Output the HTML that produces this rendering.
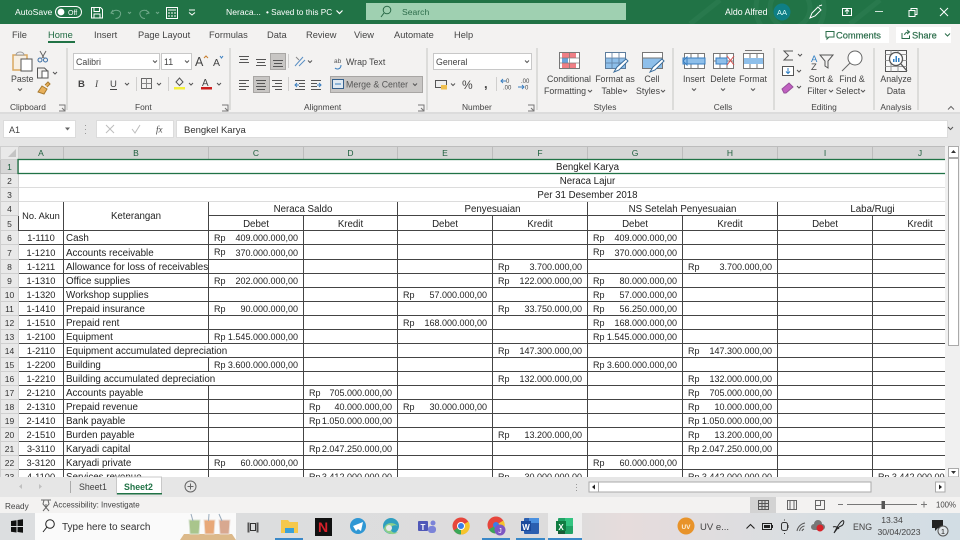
<!DOCTYPE html>
<html><head><meta charset="utf-8"><title>Neraca</title>
<style>
html,body{margin:0;padding:0;width:960px;height:540px;overflow:hidden;background:#f3f2f1}
#s{position:absolute;left:0;top:146px;width:945px;height:331px;overflow:hidden;background:#fff}
table{border-collapse:collapse;table-layout:fixed;width:967px;font:9px "Liberation Sans",sans-serif;color:#222}
td{height:14px;line-height:11px;padding:2px 5px 0 0;border:1px solid #444;text-align:right;white-space:nowrap;position:relative;box-sizing:border-box}
td i{position:absolute;left:5px;top:2px;font-style:normal}
td.h{background:#e9e9e9;border:1px solid #cfcfcf;text-align:center;color:#333;padding:2px 0 0;font-size:8.5px}
td.c{background:#d6d6d6;border:1px solid #bcbcbc;text-align:center;color:#1f5f3e;padding:2px 0 0;font-size:8.5px}
td.a{text-align:center;padding:2px 0 0;font-size:9.3px}
td.b{text-align:left;padding:2px 0 0 2px;font-size:9.8px;overflow:visible}
td.m{text-align:center;padding:2px 0 0;font-size:9.7px}
td.r{padding:0;line-height:13px}
td.n{border-right:0}
td.l{border-left:0}
td.g{text-align:center;padding:2px 0 0 189px;border:1px solid #dcdcdc;font-size:9.7px}
tr.t td{height:13px;line-height:11px;padding:0}
tr.w td.h{height:15px}
svg{position:absolute;left:0;top:0}
text{font-family:"Liberation Sans",sans-serif;font-size:9px;fill:#444}
.m2{text-anchor:middle}
</style></head><body>
<div id="s"><table>
<colgroup><col style="width:18px"><col style="width:45px"><col style="width:145px"><col style="width:95px"><col style="width:94px"><col style="width:95px"><col style="width:95px"><col style="width:95px"><col style="width:95px"><col style="width:95px"><col style="width:95px"></colgroup>
<tr class="t"><td class="h"></td><td class="c">A</td><td class="c">B</td><td class="c">C</td><td class="c">D</td><td class="c">E</td><td class="c">F</td><td class="c">G</td><td class="c">H</td><td class="c">I</td><td class="c">J</td></tr>
<tr><td class="c">1</td><td class="g" colspan="10">Bengkel Karya</td></tr>
<tr><td class="h">2</td><td class="g" colspan="10">Neraca Lajur</td></tr>
<tr><td class="h">3</td><td class="g" colspan="10">Per 31 Desember 2018</td></tr>
<tr><td class="h">4</td><td class="a r" rowspan="2">No. Akun</td><td class="m r" rowspan="2">Keterangan</td><td class="m" colspan="2">Neraca Saldo</td><td class="m" colspan="2">Penyesuaian</td><td class="m" colspan="2">NS Setelah Penyesuaian</td><td class="m" colspan="2">Laba/Rugi</td></tr>
<tr class="w"><td class="h">5</td><td class="m">Debet</td><td class="m">Kredit</td><td class="m">Debet</td><td class="m">Kredit</td><td class="m">Debet</td><td class="m">Kredit</td><td class="m">Debet</td><td class="m">Kredit</td></tr>
<tr><td class="h">6</td><td class="a">1-1110</td><td class="b">Cash</td><td><i>Rp</i>409.000.000,00</td><td></td><td></td><td></td><td><i>Rp</i>409.000.000,00</td><td></td><td></td><td></td></tr>
<tr class="w"><td class="h">7</td><td class="a">1-1210</td><td class="b">Accounts receivable</td><td><i>Rp</i>370.000.000,00</td><td></td><td></td><td></td><td><i>Rp</i>370.000.000,00</td><td></td><td></td><td></td></tr>
<tr><td class="h">8</td><td class="a">1-1211</td><td class="b">Allowance for loss of receivables</td><td></td><td></td><td></td><td><i>Rp</i>3.700.000,00</td><td></td><td><i>Rp</i>3.700.000,00</td><td></td><td></td></tr>
<tr><td class="h">9</td><td class="a">1-1310</td><td class="b">Office supplies</td><td><i>Rp</i>202.000.000,00</td><td></td><td></td><td><i>Rp</i>122.000.000,00</td><td><i>Rp</i>80.000.000,00</td><td></td><td></td><td></td></tr>
<tr><td class="h">10</td><td class="a">1-1320</td><td class="b">Workshop supplies</td><td></td><td></td><td><i>Rp</i>57.000.000,00</td><td></td><td><i>Rp</i>57.000.000,00</td><td></td><td></td><td></td></tr>
<tr><td class="h">11</td><td class="a">1-1410</td><td class="b">Prepaid insurance</td><td><i>Rp</i>90.000.000,00</td><td></td><td></td><td><i>Rp</i>33.750.000,00</td><td><i>Rp</i>56.250.000,00</td><td></td><td></td><td></td></tr>
<tr><td class="h">12</td><td class="a">1-1510</td><td class="b">Prepaid rent</td><td></td><td></td><td><i>Rp</i>168.000.000,00</td><td></td><td><i>Rp</i>168.000.000,00</td><td></td><td></td><td></td></tr>
<tr><td class="h">13</td><td class="a">1-2100</td><td class="b">Equipment</td><td><i>Rp</i>1.545.000.000,00</td><td></td><td></td><td></td><td><i>Rp</i>1.545.000.000,00</td><td></td><td></td><td></td></tr>
<tr><td class="h">14</td><td class="a">1-2110</td><td class="b n">Equipment accumulated depreciation</td><td class="l"></td><td></td><td></td><td><i>Rp</i>147.300.000,00</td><td></td><td><i>Rp</i>147.300.000,00</td><td></td><td></td></tr>
<tr><td class="h">15</td><td class="a">1-2200</td><td class="b">Building</td><td><i>Rp</i>3.600.000.000,00</td><td></td><td></td><td></td><td><i>Rp</i>3.600.000.000,00</td><td></td><td></td><td></td></tr>
<tr><td class="h">16</td><td class="a">1-2210</td><td class="b n">Building accumulated depreciation</td><td class="l"></td><td></td><td></td><td><i>Rp</i>132.000.000,00</td><td></td><td><i>Rp</i>132.000.000,00</td><td></td><td></td></tr>
<tr><td class="h">17</td><td class="a">2-1210</td><td class="b">Accounts payable</td><td></td><td><i>Rp</i>705.000.000,00</td><td></td><td></td><td></td><td><i>Rp</i>705.000.000,00</td><td></td><td></td></tr>
<tr><td class="h">18</td><td class="a">2-1310</td><td class="b">Prepaid revenue</td><td></td><td><i>Rp</i>40.000.000,00</td><td><i>Rp</i>30.000.000,00</td><td></td><td></td><td><i>Rp</i>10.000.000,00</td><td></td><td></td></tr>
<tr><td class="h">19</td><td class="a">2-1410</td><td class="b">Bank payable</td><td></td><td><i>Rp</i>1.050.000.000,00</td><td></td><td></td><td></td><td><i>Rp</i>1.050.000.000,00</td><td></td><td></td></tr>
<tr><td class="h">20</td><td class="a">2-1510</td><td class="b">Burden payable</td><td></td><td></td><td></td><td><i>Rp</i>13.200.000,00</td><td></td><td><i>Rp</i>13.200.000,00</td><td></td><td></td></tr>
<tr><td class="h">21</td><td class="a">3-3110</td><td class="b">Karyadi capital</td><td></td><td><i>Rp</i>2.047.250.000,00</td><td></td><td></td><td></td><td><i>Rp</i>2.047.250.000,00</td><td></td><td></td></tr>
<tr><td class="h">22</td><td class="a">3-3120</td><td class="b">Karyadi private</td><td><i>Rp</i>60.000.000,00</td><td></td><td></td><td></td><td><i>Rp</i>60.000.000,00</td><td></td><td></td><td></td></tr>
<tr><td class="h">23</td><td class="a">4-1100</td><td class="b">Services revenue</td><td></td><td><i>Rp</i>3.412.000.000,00</td><td></td><td><i>Rp</i>30.000.000,00</td><td></td><td><i>Rp</i>3.442.000.000,00</td><td></td><td><i>Rp</i>3.442.000.000,00</td></tr>
</table></div>

<svg width="960" height="540" viewBox="0 0 960 540" fill="none">
<!-- selection -->
<rect x="18" y="159.500" width="928" height="14" stroke="#217346" stroke-width="1.300"/>
<!-- title bar -->
<rect width="960" height="24" fill="#217346"/>
<g stroke="#2c7c50" stroke-width="5" opacity=".7"><circle cx="790" cy="8" r="20"/><circle cx="790" cy="8" r="34"/><path d="M690 24L720 0M850 24L880 0"/></g>
<text x="15" y="15" style="fill:#fff;font-size:8.600px">AutoSave</text>
<rect x="55.500" y="6.500" width="26" height="11" rx="5.500" stroke="#fff"/><circle cx="61" cy="12" r="3.400" fill="#fff"/>
<text x="68" y="15" style="fill:#fff;font-size:7px">Off</text>
<g stroke="#fff"><path d="M91.500 7.500h9l2 2v8.500h-11zM94 8v3.500h5.500V8M94 18v-4h6v4"/></g>
<g stroke="#6fa98a"><path d="M113 10l-2 3 3 1M111.500 12.500c4-4 10-2 9 2s-4 4-5 4M146 10l3 3-3 1M149 12.500c-4-4-10-2-9 2s4 4 5 4"/><path d="M128 12l1.500 1.500 1.500-1.500M156 12l1.500 1.500 1.500-1.500"/></g>
<rect x="166.500" y="7.500" width="11" height="11" stroke="#fff"/><path d="M168 10h8M168 13h2M171 13h2M174 13h2M168 16h2M171 16h2M174 16h2" stroke="#fff"/>
<path d="M189 10h6M189 12.500l3 2.500 3-2.500" stroke="#fff"/>
<text x="226" y="15" style="fill:#fff;font-size:8.600px">Neraca...</text>
<text x="266" y="15" style="fill:#fff;font-size:8.200px">• Saved to this PC</text>
<path d="M336.500 10.500l3 3 3-3" stroke="#fff" stroke-width="1.200"/>
<rect x="366" y="3" width="260" height="17" fill="#9fd0b1"/>
<circle cx="387" cy="10" r="3.800" stroke="#2a6a48"/><path d="M384 13l-3 4" stroke="#2a6a48"/>
<text x="402" y="15" style="fill:#2d6c4b;font-size:8.600px">Search</text>
<text x="725" y="15" style="fill:#fff;font-size:8.800px">Aldo Alfred</text>
<circle cx="782" cy="12" r="8.500" fill="#0f7f85"/><text x="782" y="15" class="m2" style="fill:#dff;font-size:7.500px">AA</text>
<path d="M810 18l2-5 6-6 3 3-6 6zM819 6l3-1" stroke="#fff"/>
<rect x="842.500" y="8.500" width="9" height="7" stroke="#fff"/><path d="M847 14v-4M845 11.500l2-2 2 2" stroke="#fff"/>
<path d="M875 11.500h8" stroke="#cfe3d8"/>
<path d="M909 10.500h6v6h-6zM911 10V8.500h6v6h-1.500" stroke="#fff"/>
<path d="M940 8l8 8M948 8l-8 8" stroke="#fff"/>

<!-- tabs + ribbon -->
<rect y="24" width="960" height="89" fill="#f3f2f1"/>
<rect y="113" width="960" height="33" fill="#e6e6e6"/>
<rect y="112" width="960" height="2" fill="#dcdcdc"/>
<text x="12" y="38" style="font-size:9.300px">File</text>
<text x="48" y="38" style="font-size:9.300px;fill:#1f6b42">Home</text>
<text x="94" y="38" style="font-size:9.300px">Insert</text>
<text x="138" y="38" style="font-size:9.300px">Page Layout</text>
<text x="209" y="38" style="font-size:9.300px">Formulas</text>
<text x="267" y="38" style="font-size:9.300px">Data</text>
<text x="306" y="38" style="font-size:9.300px">Review</text>
<text x="354" y="38" style="font-size:9.300px">View</text>
<text x="394" y="38" style="font-size:9.300px">Automate</text>
<text x="454" y="38" style="font-size:9.300px">Help</text>
<rect x="48" y="41" width="27" height="2" fill="#217346"/>
<rect x="820" y="27" width="69" height="16" fill="#fff"/>
<path d="M826 31.500h8v5.500h-5l-2 2v-2h-1z" stroke="#2b6d4a"/>
<text x="836" y="38.500" style="fill:#2b6d4a;font-size:9.300px;stroke:#2b6d4a;stroke-width:.2">Comments</text>
<rect x="896" y="27" width="55" height="16" fill="#fff"/>
<path d="M902 33v5.500h7.500v-3M904.500 35c.5-2 2-3 4-3M907 30l2.500 2-2.500 2" stroke="#2b6d4a"/>
<text x="912" y="38.500" style="fill:#2b6d4a;font-size:9.300px;stroke:#2b6d4a;stroke-width:.2">Share</text>
<path d="M945 33.500l2.500 2.500 2.500-2.500" stroke="#2b6d4a"/>

<!-- separators -->
<g stroke="#d0cfce" stroke-width="1.300"><path d="M67 48v62M230 48v62M427 48v62M537 48v62M673 48v62M774 48v62M874 48v62M918 48v62"/></g>

<!-- clipboard -->
<rect x="13" y="55" width="14" height="15" fill="#f7efe2" stroke="#d9a860" stroke-width="1.500"/>
<path d="M16 55c0-4 8-4 8 0z" fill="#eee" stroke="#999"/>
<rect x="21" y="59" width="11" height="12" fill="#fff" stroke="#555"/>
<text x="11" y="82" style="font-size:8.800px">Paste</text>
<path d="M18 88.500l2 2 2-2" stroke="#555"/>
<path d="M40 51l4 7M46 51l-4 7" stroke="#666"/><circle cx="40" cy="60" r="2" stroke="#3a6ea5"/><circle cx="45.500" cy="60" r="2" stroke="#3a6ea5"/>
<path d="M37.500 68h7l3 3v7h-10z" stroke="#555"/><rect x="42" y="71" width="6" height="7" fill="#fff" stroke="#555"/>
<path d="M53 72l2 2 2-2" stroke="#555"/>
<path d="M38 92l4-6 5 3-3 5zM45 85l3-3 2 2-3 3" fill="#e8b05a" stroke="#a87a30"/>
<text x="10" y="110" style="font-size:8.400px">Clipboard</text>
<path d="M59 105h6v6h-6M65 111l-3-3" stroke="#777"/>

<!-- font -->
<rect x="73.500" y="53.500" width="86" height="16" fill="#fff" stroke="#c8c8c8"/>
<text x="76" y="65" style="font-size:8.800px">Calibri</text><path d="M153 60.500l2 2 2-2" stroke="#555"/>
<rect x="161.500" y="53.500" width="30" height="16" fill="#fff" stroke="#c8c8c8"/>
<text x="164" y="65" style="font-size:8.800px">11</text><path d="M185 60.500l2 2 2-2" stroke="#555"/>
<text x="195" y="66" style="font-size:12.500px">A</text><path d="M204 58l2-2 2 2" stroke="#c77c2a"/>
<text x="213" y="66" style="font-size:10.500px">A</text><path d="M220 56l1.500 2 1.500-2" stroke="#3a7ebf"/>
<text x="78" y="87" style="font-size:9.500px;font-weight:bold">B</text>
<text x="95" y="87" style="font-size:9.500px;font-style:italic;font-family:'Liberation Serif',serif">I</text>
<text x="110" y="87" style="font-size:9.500px">U</text><path d="M110 89.500h7" stroke="#444"/>
<path d="M125 83l2 2 2-2M157 83l2 2 2-2M189 83l2 2 2-2M217 83l2 2 2-2" stroke="#555"/>
<path d="M136.500 77v14M168.500 77v14" stroke="#d0cfce"/>
<rect x="141.500" y="78.500" width="10" height="10" stroke="#666"/><path d="M146.500 78.500v10M141.500 83.500h10" stroke="#888"/>
<path d="M176 82l3.500-4 3.500 4-3.500 3.500z" stroke="#555"/><rect x="174" y="87" width="11" height="2.500" fill="#f4f03a"/>
<text x="202" y="86" style="font-size:9.800px">A</text><rect x="201" y="87" width="11" height="2.500" fill="#cc1f1f"/>
<text x="135" y="110" style="font-size:8.400px">Font</text>
<path d="M222 105h6v6h-6M228 111l-3-3" stroke="#777"/>

<!-- alignment -->
<rect x="270.500" y="53.500" width="15" height="16" fill="#c8c6c4" stroke="#a8a6a4"/>
<rect x="253.500" y="76.500" width="16" height="16" fill="#c8c6c4" stroke="#a8a6a4"/>
<g stroke="#555"><path d="M239 56.500h10M240 59.500h8M239 62.500h10M256 59.500h10M257 62.500h8M256 65.500h10M273 60.500h10M274 63.500h8M273 66.500h10"/>
<path d="M239 80.500h10M239 83.500h7M239 86.500h10M239 89.500h7M256 80.500h10M257 83.500h8M256 86.500h10M257 89.500h8M272 80.500h10M275 83.500h7M272 86.500h10M275 89.500h7"/>
<path d="M288.500 54v14M288.500 77v14" stroke="#d0cfce"/>
<path d="M295 66l8-9M299 66l6-6" stroke="#5a8fc4"/><path d="M296 57l3 3" stroke="#888"/><path d="M308 60.500l2 2 2-2"/>
<path d="M295 80.500h10M299 83.500h6M299 86.500h6M295 89.500h10M311 80.500h10M311 83.500h6M311 86.500h6M311 89.500h10"/></g>
<path d="M299 85h-4M297 83l-2 2 2 2M317 85h4M319 83l2 2-2 2" stroke="#3a7ebf"/>
<text x="334" y="63" style="font-size:6.500px;fill:#555">ab</text><path d="M335 68c2 2 6 1 6-3" stroke="#3a7ebf"/>
<text x="346" y="65" style="font-size:8.800px">Wrap Text</text>
<rect x="330.500" y="76.500" width="92" height="16" fill="#c8c6c4" stroke="#a8a6a4"/>
<rect x="332.500" y="79.500" width="11" height="9" fill="#dfe9f2" stroke="#35608c"/><path d="M335 84h6" stroke="#3a7ebf"/>
<text x="346" y="87.500" style="font-size:8.800px;fill:#555">Merge &amp; Center</text>
<path d="M413 83.500l2 2 2-2" stroke="#555"/>
<text x="304" y="110" style="font-size:8.400px">Alignment</text>
<path d="M418 105h6v6h-6M424 111l-3-3" stroke="#777"/>

<!-- number -->
<rect x="433.500" y="53.500" width="98" height="16" fill="#fff" stroke="#c8c8c8"/>
<text x="436" y="65" style="font-size:8.800px">General</text><path d="M525 60.500l2 2 2-2" stroke="#555"/>
<rect x="435.500" y="80.500" width="11" height="7" fill="#eee" stroke="#555"/><rect x="441" y="85" width="6" height="4.500" fill="#f0c050"/>
<path d="M451 83.500l2 2 2-2" stroke="#555"/>
<text x="462" y="89" style="font-size:12px">%</text>
<text x="484" y="88" style="font-size:13px;font-weight:bold">,</text>
<path d="M496.500 77v14" stroke="#d0cfce"/>
<text x="506" y="83" style="font-size:6px">0</text><text x="503" y="89.500" style="font-size:6px">.00</text><path d="M506 81h-5M503 79l-2 2 2 2" stroke="#3a7ebf"/>
<text x="521" y="83" style="font-size:6px">.00</text><text x="525" y="89.500" style="font-size:6px">0</text><path d="M518 87h6M522 85l2 2-2 2" stroke="#3a7ebf"/>
<text x="462" y="110" style="font-size:8.400px">Number</text>
<path d="M528 105h6v6h-6M534 111l-3-3" stroke="#777"/>

<!-- styles -->
<rect x="559.500" y="52.500" width="20" height="16" fill="#fff" stroke="#777"/>
<path d="M562 53h6v15h-6zM568 53h8v5h-8zM568 63h8v5h-8z" fill="#ef7f85"/><path d="M562 58h6v5h-6z" fill="#6aa3dc"/><path d="M559.500 58h20M559.500 63h20M569.500 53v15" stroke="#777" opacity=".7"/>
<rect x="605.500" y="52.500" width="20" height="16" fill="#fff" stroke="#5c7c9c"/><rect x="606" y="58" width="19" height="10" fill="#8ebfea"/><path d="M605.500 58h20M605.500 63h20M612 53v15M619 53v15" stroke="#5c7c9c" opacity=".8"/><path d="M614 72l3-5 9-8 2 2-9 9z" fill="#fff" stroke="#3a6d9c"/>
<rect x="642.500" y="52.500" width="20" height="16" fill="#fff" stroke="#777"/><rect x="643" y="58" width="19" height="10" fill="#8ebfea"/><path d="M642.500 58h20" stroke="#777"/><path d="M650 72l3-5 9-8 2 2-9 9z" fill="#fff" stroke="#3a6d9c"/>
<text x="569" y="82" class="m2" style="font-size:8.800px">Conditional</text>
<text x="565" y="94" class="m2" style="font-size:8.800px">Formatting</text><path d="M588 90l2 2 2-2" stroke="#555"/>
<text x="615" y="82" class="m2" style="font-size:8.800px">Format as</text>
<text x="612" y="94" class="m2" style="font-size:8.800px">Table</text><path d="M623 90l2 2 2-2" stroke="#555"/>
<text x="652" y="82" class="m2" style="font-size:8.800px">Cell</text>
<text x="648" y="94" class="m2" style="font-size:8.800px">Styles</text><path d="M661 90l2 2 2-2" stroke="#555"/>
<text x="605" y="110" class="m2" style="font-size:8.400px">Styles</text>

<!-- cells -->
<g stroke="#777"><rect x="684.500" y="53.500" width="20" height="15" fill="#fff"/><path d="M684.500 61h20M691 53.500v15M698 53.500v15"/>
<rect x="713.500" y="53.500" width="20" height="15" fill="#fff"/><path d="M713.500 61h20M720 53.500v15M727 53.500v15"/>
<rect x="743.500" y="53.500" width="20" height="15" fill="#fff"/><path d="M743.500 61h20M750 53.500v15M757 53.500v15M745 50.500h17"/></g>
<rect x="683" y="58" width="22" height="6" fill="#8ebfea" stroke="#3a7ebf"/><path d="M683 61l4-4v8z" fill="#8ebfea" stroke="#3a7ebf"/>
<rect x="716" y="58" width="11" height="6" fill="#8ebfea" stroke="#3a7ebf"/><path d="M727 56l7 9M734 56l-7 9" stroke="#d8504f"/>
<rect x="744" y="58" width="19" height="6" fill="#8ebfea"/>
<text x="694" y="82" class="m2" style="font-size:8.800px">Insert</text><path d="M692 88.500l2 2 2-2" stroke="#555"/>
<text x="723" y="82" class="m2" style="font-size:8.800px">Delete</text><path d="M721 88.500l2 2 2-2" stroke="#555"/>
<text x="753" y="82" class="m2" style="font-size:8.800px">Format</text><path d="M751 88.500l2 2 2-2" stroke="#555"/>
<text x="723" y="110" class="m2" style="font-size:8.400px">Cells</text>

<!-- editing -->
<path d="M793 51h-9l4.500 4.500-4.500 4.500h9" stroke="#555"/>
<path d="M798 54l2 2 2-2M797 70l2 2 2-2M797 86l2 2 2-2" stroke="#555"/>
<rect x="782.500" y="66.500" width="11" height="9" fill="#fff" stroke="#555"/><path d="M788 68v5M786 71.500l2 2 2-2" stroke="#2f7fc4"/>
<path d="M782 89l7-6 4 4-7 6h-2z" fill="#c060c0" stroke="#96509a"/>
<text x="811" y="62" style="font-size:9.500px;fill:#2f7fc4">A</text><text x="811" y="70" style="font-size:9.500px">Z</text>
<path d="M820 55h13l-5 6v7l-3-2v-5z" stroke="#555"/>
<text x="821" y="82" class="m2" style="font-size:8.800px">Sort &amp;</text>
<text x="817" y="94" class="m2" style="font-size:8.800px">Filter</text><path d="M829 90l2 2 2-2" stroke="#555"/>
<circle cx="855" cy="58" r="7" fill="#fff" stroke="#666"/><path d="M850 63l-8 8" stroke="#666"/>
<text x="852" y="82" class="m2" style="font-size:8.800px">Find &amp;</text>
<text x="848" y="94" class="m2" style="font-size:8.800px">Select</text><path d="M861 90l2 2 2-2" stroke="#555"/>
<text x="824" y="110" class="m2" style="font-size:8.400px">Editing</text>

<!-- analyze -->
<rect x="885.500" y="50.500" width="21" height="21" fill="#f8f8f8" stroke="#555"/><path d="M885.500 54.500h21M885.500 60.500h21M885.500 66.500h21M891 50.500v21M898 50.500v21" stroke="#999"/>
<circle cx="896" cy="59" r="6.500" fill="#fff" stroke="#555" stroke-width="1.300"/><path d="M893 59h1.500v3H893zM895.500 56h1.500v6h-1.500zM898 58h1.500v4H898z" fill="#2f7fc4"/>
<path d="M901 64l6 7" stroke="#555" stroke-width="1.300"/>
<text x="896" y="82" class="m2" style="font-size:8.800px">Analyze</text>
<text x="896" y="94" class="m2" style="font-size:8.800px">Data</text>
<text x="896" y="110" class="m2" style="font-size:8.400px">Analysis</text>
<path d="M948 109.500l3-3 3 3" stroke="#666"/>

<!-- formula bar -->
<rect x="3.500" y="120.500" width="72" height="17" fill="#fff" stroke="#dcdcdc"/>
<text x="9" y="133" style="font-size:9px">A1</text><path d="M65 127.500h5l-2.500 3z" fill="#666"/>
<path d="M85.500 125v1M85.500 129v1M85.500 133v1" stroke="#999"/>
<rect x="96.500" y="120.500" width="77" height="17" fill="#fff" stroke="#dcdcdc"/>
<path d="M106 125l8 8M114 125l-8 8M132 129l3 4 5-8" stroke="#bdbdbd"/>
<text x="156" y="132.500" style="font-size:9px;font-style:italic;font-family:'Liberation Serif',serif">fx</text>
<rect x="176.500" y="120.500" width="771" height="17" fill="#fff" stroke="#dcdcdc"/>
<text x="184" y="133" style="font-size:9.500px;fill:#333">Bengkel Karya</text>
<path d="M948 127l2.500 2.500 2.500-2.500" stroke="#555"/>

<!-- corner + right scrollbar -->
<path d="M16 149v8h-8z" fill="#c4c4c4"/>
<rect x="945" y="146" width="15" height="331" fill="#f0f0f0"/>
<rect x="948.500" y="146.500" width="10" height="11" fill="#fff" stroke="#aaa"/><path d="M951 153h5l-2.500-3z" fill="#333"/>
<rect x="948.500" y="158.500" width="10" height="187" fill="#fff" stroke="#aaa"/>
<rect x="948.500" y="468.500" width="10" height="8.500" fill="#fff" stroke="#aaa"/><path d="M951 471h5l-2.500 3z" fill="#333"/>

<!-- sheet tabs -->
<rect y="477" width="960" height="20" fill="#e6e6e6"/>
<path d="M22 484l-3 2.500 3 2.500zM39 484l3 2.500-3 2.500" fill="#c0c0c0"/>
<path d="M70.500 481v12" stroke="#aaa"/>
<text x="79" y="490" style="font-size:8.800px">Sheet1</text>
<rect x="116.500" y="477" width="45" height="17" fill="#fff" stroke="#c8c8c8"/>
<rect x="117" y="493" width="45" height="1.500" fill="#217346"/>
<text x="124" y="490" style="font-size:8.800px;font-weight:bold;fill:#217346">Sheet2</text>
<circle cx="190.500" cy="486.500" r="5.500" stroke="#666"/><path d="M187.500 486.500h6M190.500 483.500v6" stroke="#666"/>
<path d="M576.500 484v1M576.500 487v1M576.500 490v1" stroke="#999"/>
<rect x="589" y="482" width="282" height="10" fill="#fff" stroke="#aaa"/><rect x="589" y="482" width="9.500" height="10" fill="#fff" stroke="#aaa"/>
<path d="M595 484.500v5l-3-2.500z" fill="#222"/>
<rect x="935.500" y="482" width="9.500" height="10" fill="#fff" stroke="#aaa"/><path d="M939 484.500v5l3-2.500z" fill="#222"/>

<!-- status -->
<rect y="497" width="960" height="16" fill="#f3f2f1"/>
<text x="5" y="509" style="font-size:8.200px">Ready</text>
<path d="M41 500h10M44 500l-1 4 6 7M48 500l1 4-6 7M46 504v3" stroke="#666"/>
<text x="53" y="507.500" style="font-size:8px">Accessibility: Investigate</text>
<rect x="750" y="497" width="26" height="16" fill="#d3d3d3"/>
<rect x="758.500" y="500.500" width="10" height="9" stroke="#555"/><path d="M758.500 503.500h10M758.500 506.500h10M762 500.500v9M765 500.500v9" stroke="#555"/>
<rect x="787.500" y="500.500" width="9" height="9" stroke="#666"/><path d="M790 500.500v9M794 500.500v9" stroke="#666"/>
<rect x="815.500" y="500.500" width="9" height="9" stroke="#666"/><path d="M820.500 500.500v5h-5" stroke="#666"/>
<path d="M838 504.500h5M847 504.500h70M921 504.500h6M924 501.500v6" stroke="#777"/>
<rect x="881.500" y="501" width="3.500" height="8" fill="#555"/>
<text x="936" y="507.500" style="font-size:7.800px">100%</text>

<!-- taskbar -->
<defs><linearGradient id="tb" x1="0" x2="1" y1="0" y2="0"><stop offset="0" stop-color="#dcdee0"/><stop offset=".6" stop-color="#dddcdc"/><stop offset=".65" stop-color="#e6dcdc"/><stop offset=".85" stop-color="#d8dee2"/><stop offset="1" stop-color="#d2dde4"/></linearGradient></defs>
<rect y="513" width="960" height="27" fill="url(#tb)"/>
<path d="M11 521l5.500-.8V526H11zM17.500 520l5.500-.8V526h-5.500zM11 527h5.500v5.500L11 531.800zM17.500 527H23v5.800l-5.500-.8z" fill="#111"/>
<rect x="35" y="513" width="201" height="27" fill="#fafafa"/>
<circle cx="50" cy="524" r="4.300" stroke="#222"/><path d="M47 527l-4 5" stroke="#222"/>
<text x="62" y="530" style="font-size:10px;fill:#333">Type here to search</text>
<path d="M180 540l4-6h48l4 6z" fill="#dcb98a"/>
<path d="M189 520h11l-1 14h-9z" fill="#a9c58c" stroke="#d6e2d0"/><path d="M204 520h11l-1 14h-9z" fill="#e8a878" stroke="#eedccf"/><path d="M219 520h11l-1 14h-9z" fill="#d8a890" stroke="#eadcd6"/>
<path d="M191 514l2 7M209 514l-.5 7M219 514l3 7" stroke="#9ab"/>
<path d="M247.500 522.500h2v10h-2zM256.500 522.500h2v10h-2z" fill="#555"/><rect x="250.500" y="523.500" width="5" height="7" stroke="#333"/>
<path d="M281 520h7l1.500 2H298v11h-17z" fill="#f5c84c"/><rect x="285" y="528" width="9" height="5" fill="#3aa0d8"/>
<rect x="275" y="538" width="28" height="2" fill="#3a88c8"/>
<rect x="315" y="518" width="17" height="18" fill="#111"/><text x="323" y="532" class="m2" style="font-size:14px;font-weight:bold;fill:#d8202a">N</text>
<circle cx="358" cy="526" r="8" fill="#2f97d4"/><path d="M353 526l10-4-2 9-3-2-2 2z" fill="#fff"/>
<circle cx="391" cy="526" r="8" fill="#2f9fc0"/><path d="M384 529c1-6 8-8 14-3-4-2-8 0-7 4 1 3 4 3 7 2-4 4-12 2-14-3z" fill="#8fd08a"/><circle cx="389" cy="528" r="3" fill="#e8e8e8"/>
<rect x="418" y="521" width="10" height="10" rx="1" fill="#5058b8"/><text x="423" y="530" class="m2" style="font-size:8px;font-weight:bold;fill:#fff">T</text><circle cx="433" cy="523" r="2.500" fill="#7b83d8"/><rect x="428" y="526" width="8" height="7" rx="3" fill="#7b83d8"/>
<circle cx="461" cy="526" r="8.500" fill="#e6463c"/><path d="M461 526l-7.200 4.500A8.500 8.500 0 0 0 461 534.500z" fill="#3aa757"/><path d="M461 526l7.400-4.500A8.500 8.500 0 0 1 461 534.500z" fill="#f6c42c"/><circle cx="461" cy="526" r="4" fill="#fff"/><circle cx="461" cy="526" r="3" fill="#3a7ee8"/>
<circle cx="496" cy="525" r="8.500" fill="#e6463c"/><path d="M496 525l-7.200 4.500A8.500 8.500 0 0 0 496 533.500z" fill="#3aa757"/><path d="M496 525l7.400-4.500A8.500 8.500 0 0 1 496 533.500z" fill="#f6c42c"/><circle cx="496" cy="525" r="3" fill="#3a7ee8"/>
<circle cx="500" cy="530" r="5.500" fill="#7e57c2"/><text x="500" y="533" class="m2" style="font-size:7px;fill:#fff">J</text>
<rect x="482" y="538" width="28" height="2" fill="#3a88c8"/>
<rect x="524" y="518" width="15" height="16" rx="1" fill="#2b5fb0"/><path d="M529 518h10v5h-10z" fill="#4a90e0"/><rect x="521" y="521" width="10" height="10" fill="#1a4a9c"/><text x="526" y="530" class="m2" style="font-size:8px;font-weight:bold;fill:#fff">W</text>
<rect x="516" y="538" width="29" height="2" fill="#3a88c8"/>
<rect x="548" y="513" width="34" height="27" fill="#efefef"/>
<rect x="558" y="518" width="15" height="16" rx="1" fill="#21a366"/><path d="M565 518h8v8h-8z" fill="#33c481"/><path d="M558 526h7v8h-7z" fill="#185c37"/><rect x="556" y="521" width="10" height="10" fill="#107c41"/><text x="561" y="530" class="m2" style="font-size:8px;font-weight:bold;fill:#fff">X</text>
<rect x="548" y="538" width="34" height="2" fill="#3a88c8"/>
<circle cx="686" cy="526" r="8.500" fill="#e8932a"/><text x="686" y="529" class="m2" style="font-size:6.500px;font-weight:bold;fill:#fdf0d8">UV</text>
<text x="700" y="530" style="font-size:9.500px">UV e...</text>
<path d="M746.500 528.500l4-4 4 4" stroke="#222" stroke-width="1.100"/>
<rect x="762.500" y="523.500" width="9" height="6" stroke="#222"/><rect x="764" y="525" width="6" height="3" fill="#222"/><rect x="772" y="525" width="1" height="3" fill="#222"/>
<rect x="781.500" y="522.500" width="6" height="8" rx="2" stroke="#333"/><path d="M784.500 519.500v1M784.500 533v1M788 525v3" stroke="#333"/>
<path d="M797 531a10 10 0 0 1 8-8M799.500 531a6 6 0 0 1 5-5M802 531a3 3 0 0 1 2-2" stroke="#555"/>
<path d="M814 530a3 3 0 0 1 0-6 4 4 0 0 1 8 0 3 3 0 0 1 0 6z" fill="#777"/><circle cx="820" cy="528" r="3.500" fill="#d8232a"/>
<path d="M834 533c2-4 5-10 8-12s2 4-1 5-4 3-7 7zM833 527c2-1 5 0 6 2" stroke="#222"/>
<text x="853" y="530" style="font-size:8.800px">ENG</text>
<text x="892" y="523" class="m2" style="font-size:8.600px">13.34</text>
<text x="899" y="535" class="m2" style="font-size:8.600px">30/04/2023</text>
<path d="M932 520h11v8h-5l-3 3v-3h-3z" fill="#222"/>
<circle cx="943" cy="531" r="5" fill="#dfe4e8" stroke="#555"/><text x="943" y="534" class="m2" style="font-size:7.500px;fill:#222">1</text>
</svg>
</body></html>
